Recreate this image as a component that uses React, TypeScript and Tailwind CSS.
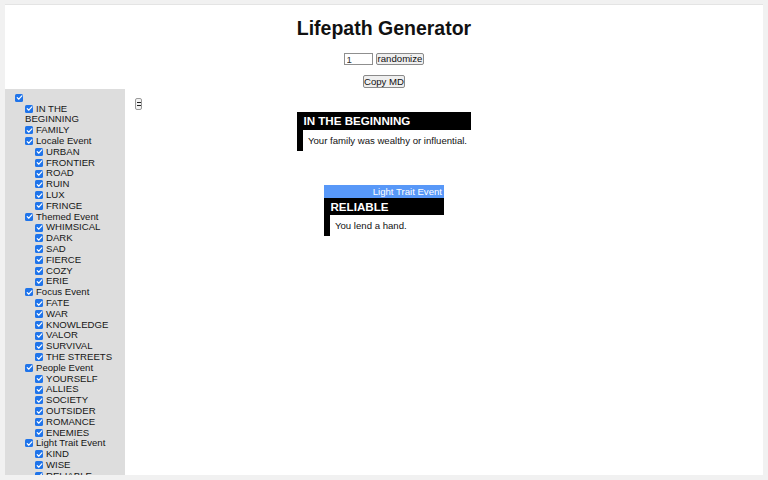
import React from "react";

type Group = { label: string; children?: string[] };

const groups: Group[] = [
  { label: "FAMILY" },
  { label: "Locale Event", children: ["URBAN", "FRONTIER", "ROAD", "RUIN", "LUX", "FRINGE"] },
  { label: "Themed Event", children: ["WHIMSICAL", "DARK", "SAD", "FIERCE", "COZY", "ERIE"] },
  { label: "Focus Event", children: ["FATE", "WAR", "KNOWLEDGE", "VALOR", "SURVIVAL", "THE STREETS"] },
  { label: "People Event", children: ["YOURSELF", "ALLIES", "SOCIETY", "OUTSIDER", "ROMANCE", "ENEMIES"] },
  { label: "Light Trait Event", children: ["KIND", "WISE", "RELIABLE", "BRAVE"] },
];

function Check() {
  return (
    <span className="inline-flex size-[8px] shrink-0 items-center justify-center rounded-[1.5px] bg-[#1f74ea]">
      <svg viewBox="0 0 10 10" className="size-[7px]" fill="none">
        <path d="M1.8 5.2 4 7.4 8.3 2.6" stroke="white" strokeWidth="1.8" strokeLinecap="round" strokeLinejoin="round" />
      </svg>
    </span>
  );
}

function Row({ indent, label }: { indent: string; label?: string }) {
  return (
    <div className={`flex h-[10.8px] items-center gap-[3px] ${indent}`}>
      <Check />
      {label && <span className="whitespace-nowrap">{label}</span>}
    </div>
  );
}

function Card({ tag, title, text }: { tag?: string; title: string; text: string }) {
  return (
    <div className="mx-auto w-fit min-w-[120px]">
      {tag && (
        <div className="h-[13px] bg-[#5898f8] pr-[2px] text-right text-[9.6px] leading-[13px] text-white">{tag}</div>
      )}
      <div className="h-[17.5px] bg-black pl-[6.5px] pr-[4px] text-[11.6px] font-bold leading-[17.5px] text-white">
        {title}
      </div>
      <div className="h-[21px] border-l-[6px] border-black pl-[5px] pr-[4px] text-[9.6px] leading-[21px] text-[#111]">
        {text}
      </div>
    </div>
  );
}

export default function App() {
  return (
    <div className="h-screen overflow-hidden bg-[#f1f1f1] pl-[5px] pt-[4px] font-['Liberation_Sans',Arial,sans-serif]">
      <div className="h-[471px] w-[758px] overflow-hidden border-t border-[#e4e4e4] bg-white">
        <h1 className="mt-[12px] text-center text-[19.5px] font-bold leading-[22px] text-[#111]">Lifepath Generator</h1>

        <div className="mt-[14px] flex items-center justify-center gap-[3px] text-[9.6px]">
          <input
            defaultValue="1"
            className="h-[12px] w-[29px] border border-[#8f8f8f] px-[2px] text-[9.6px] leading-[10px] text-[#333] outline-none"
          />
          <button className="h-[12px] rounded-[2px] border border-[#8a8a8a] bg-[#efefef] px-[1px] leading-[10px] text-[#111]">
            randomize
          </button>
        </div>

        <div className="mt-[10px] flex justify-center">
          <button className="h-[13px] w-[42px] rounded-[2px] border border-[#8a8a8a] bg-[#efefef] text-[9.6px] leading-[11px] text-[#111]">
            Copy MD
          </button>
        </div>

        <div className="mt-[1px]">
          <aside className="float-left h-[390px] w-[120px] bg-[#dddddd] pt-[3.6px] text-[9.6px] text-[#161616]">
            <Row indent="pl-[10px]" />
            <Row indent="pl-[20px]" label="IN THE" />
            <div className="h-[10.8px] pl-[20px] leading-[10.8px]">BEGINNING</div>
            {groups.map((g) => (
              <div key={g.label}>
                <Row indent="pl-[20px]" label={g.label} />
                {g.children?.map((c) => (
                  <Row key={c} indent="pl-[30px]" label={c} />
                ))}
              </div>
            ))}
          </aside>

          <main className="pt-[9px]">
            <div className="h-[12px] leading-[12px]">
              <button className="ml-[10px] inline-flex h-[12px] w-[7px] flex-col items-center justify-center gap-[1.5px] rounded-[2px] border border-[#9a9a9a] bg-[#f3f3f3] align-top">
                <span className="h-[1.2px] w-[4px] bg-[#222]" />
                <span className="h-[1.2px] w-[4px] bg-[#222]" />
              </button>
            </div>
            <div className="mt-[2px]">
              <Card title="IN THE BEGINNING" text="Your family was wealthy or influential." />
            </div>
            <div className="mt-[34px]">
              <Card tag="Light Trait Event" title="RELIABLE" text="You lend a hand." />
            </div>
          </main>
        </div>
      </div>
    </div>
  );
}
